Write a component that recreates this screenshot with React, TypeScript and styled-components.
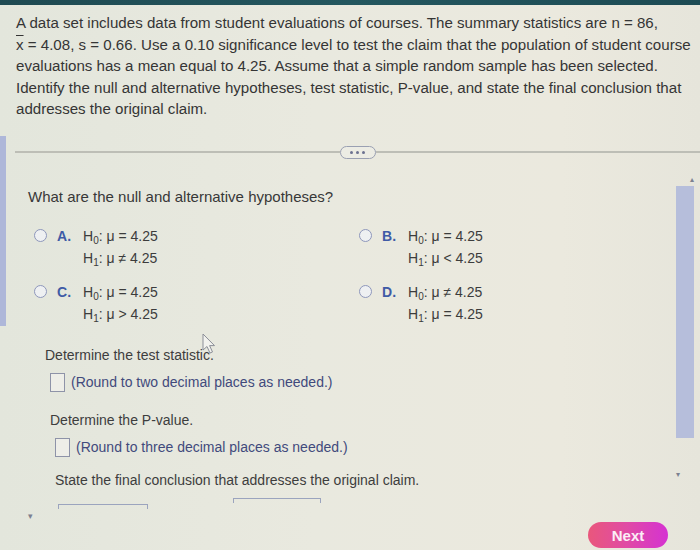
import React from 'react';
import styled, { createGlobalStyle } from 'styled-components';

const GlobalStyle = createGlobalStyle`
  html, body {
    margin: 0;
    padding: 0;
    background: #e7e7de;
  }
  * {
    box-sizing: border-box;
  }
`;

const options = [
  { letter: 'A', h0: '= 4.25', h1: '\u2260 4.25' },
  { letter: 'B', h0: '= 4.25', h1: '< 4.25' },
  { letter: 'C', h0: '= 4.25', h1: '> 4.25' },
  { letter: 'D', h0: '\u2260 4.25', h1: '= 4.25' },
];

const App = () => {
  return (
    <>
      <GlobalStyle />
      <Page>
        <TopBar />
        <Problem>
          <p>
            A data set includes data from student evaluations of courses. The summary statistics are n = 86,
          </p>
          <p>
            <XBar>x</XBar> = 4.08, s = 0.66. Use a 0.10 significance level to test the claim that the population of student course
          </p>
          <p>evaluations has a mean equal to 4.25. Assume that a simple random sample has been selected.</p>
          <p>Identify the null and alternative hypotheses, test statistic, P-value, and state the final conclusion that</p>
          <p>addresses the original claim.</p>
        </Problem>

        <Body>
          <LeftRail />
          <Column>
            <Divider>
              <DividerLine />
              <Pill>
                <Dot />
                <Dot />
                <Dot />
              </Pill>
              <DividerLine />
            </Divider>

            <Content>
              <Main>
                <Question>What are the null and alternative hypotheses?</Question>
                <OptionGrid>
                  {options.map((o) => (
                    <Option key={o.letter}>
                      <Radio />
                      <Letter>{o.letter}.</Letter>
                      <Hypotheses>
                        <span>
                          H<sub>0</sub>: {'\u03bc'} {o.h0}
                        </span>
                        <span>
                          H<sub>1</sub>: {'\u03bc'} {o.h1}
                        </span>
                      </Hypotheses>
                    </Option>
                  ))}
                </OptionGrid>

                <Prompt $indent={17} $top={20}>
                  Determine the test statistic.
                </Prompt>
                <AnswerRow $indent={22} $top={8}>
                  <AnswerBox />
                  <Hint>(Round to two decimal places as needed.)</Hint>
                </AnswerRow>

                <Prompt $indent={22} $top={18}>
                  Determine the P-value.
                </Prompt>
                <AnswerRow $indent={27} $top={8}>
                  <AnswerBox />
                  <Hint>(Round to three decimal places as needed.)</Hint>
                </AnswerRow>

                <Prompt $indent={27} $top={13}>
                  State the final conclusion that addresses the original claim.
                </Prompt>
                <DropRow>
                  <DropSlot $width={90} $lift={0} />
                  <DropSlot $width={88} $lift={6} />
                </DropRow>
                <SmallArrow>{'\u25be'}</SmallArrow>
              </Main>

              <ScrollColumn>
                <ScrollArrow $align="flex-end">{'\u25b4'}</ScrollArrow>
                <ScrollTrack />
                <ScrollArrow $align="flex-start" $top={33}>
                  {'\u25be'}
                </ScrollArrow>
              </ScrollColumn>
            </Content>
          </Column>
        </Body>

        <Footer>
          <NextButton type="button">Next</NextButton>
        </Footer>

        <Cursor viewBox="0 0 14 22" width="14" height="22">
          <path
            d="M1 1 L1 17 L5 13.5 L8 20 L10.5 19 L7.6 12.6 L12.5 12.6 Z"
            fill="#f2f2ee"
            stroke="#8c8f98"
            strokeWidth="1"
            strokeLinejoin="round"
          />
        </Cursor>
      </Page>
    </>
  );
};

export default App;

const Page = styled.div`
  position: relative;
  width: 700px;
  height: 550px;
  overflow: hidden;
  display: flex;
  flex-direction: column;
  font-family: 'Liberation Sans', Arial, sans-serif;
  color: #3a3a3a;
  background: linear-gradient(90deg, #e3e6dc 0%, #e9e9df 45%, #ebe9de 80%, #e6e5db 100%);
`;

const TopBar = styled.div`
  height: 5px;
  flex-shrink: 0;
  background: linear-gradient(90deg, #1f4a52, #24575f 50%, #1d4b54);
`;

const Problem = styled.div`
  padding: 7px 16px 0;
  font-size: 15.1px;
  line-height: 21.5px;
  color: #353535;

  p {
    margin: 0;
    white-space: nowrap;
  }
`;

const XBar = styled.span`
  text-decoration: overline;
`;

const Body = styled.div`
  flex: 1;
  min-height: 0;
  display: flex;
  margin-top: 16px;
  overflow: hidden;
`;

const LeftRail = styled.div`
  width: 6px;
  height: 190px;
  flex-shrink: 0;
  background: #aeb7d9;
`;

const Column = styled.div`
  flex: 1;
  display: flex;
  flex-direction: column;
  padding-top: 10px;
`;

const Divider = styled.div`
  display: flex;
  align-items: center;
  height: 13px;
  margin-left: 9px;
`;

const DividerLine = styled.div`
  flex: 1;
  height: 2px;
  background: #bdbeb6;
`;

const Pill = styled.div`
  width: 36px;
  height: 13px;
  border: 1.5px solid #9aa0b2;
  border-radius: 7px;
  background: #ecece4;
  display: flex;
  align-items: center;
  justify-content: center;
  gap: 3px;
`;

const Dot = styled.span`
  width: 3px;
  height: 3px;
  border-radius: 50%;
  background: #6c7290;
`;

const Content = styled.div`
  flex: 1;
  display: flex;
`;

const Main = styled.div`
  flex: 1;
  padding: 28px 0 0 22px;
`;

const Question = styled.div`
  font-size: 15px;
  line-height: 20px;
  color: #383838;
`;

const OptionGrid = styled.div`
  display: grid;
  grid-template-columns: 325px 1fr;
  row-gap: 12px;
  margin: 18px 0 0 6px;
`;

const Option = styled.div`
  display: flex;
  align-items: flex-start;
`;

const Radio = styled.span`
  width: 13px;
  height: 13px;
  margin-top: 4px;
  border-radius: 50%;
  border: 1.5px solid #8e97bb;
  background: #eef0f2;
  flex-shrink: 0;
`;

const Letter = styled.span`
  width: 36px;
  padding-left: 10px;
  font-size: 14px;
  line-height: 22px;
  font-weight: bold;
  color: #3f5ba6;
`;

const Hypotheses = styled.div`
  display: flex;
  flex-direction: column;
  font-size: 14px;
  line-height: 22px;
  color: #3c3c3c;

  sub {
    font-size: 10px;
    vertical-align: -3px;
    line-height: 0;
  }
`;

const Prompt = styled.div<{ $indent: number; $top: number }>`
  margin: ${(p) => p.$top}px 0 0 ${(p) => p.$indent}px;
  font-size: 14px;
  line-height: 20px;
  color: #3d3d3d;
`;

const AnswerRow = styled.div<{ $indent: number; $top: number }>`
  display: flex;
  align-items: center;
  gap: 6px;
  margin: ${(p) => p.$top}px 0 0 ${(p) => p.$indent}px;
`;

const AnswerBox = styled.span`
  width: 15px;
  height: 19px;
  border: 1px solid #8e93a8;
  background: #eeeee8;
`;

const Hint = styled.span`
  font-size: 14px;
  color: #414a7c;
`;

const DropRow = styled.div`
  display: flex;
  align-items: flex-start;
  gap: 85px;
  margin: 8px 0 0 30px;
`;

const DropSlot = styled.span<{ $width: number; $lift: number }>`
  width: ${(p) => p.$width}px;
  height: 5px;
  margin-top: ${(p) => 6 - p.$lift}px;
  border: 1.5px solid #9ba4be;
  border-bottom: none;
`;

const SmallArrow = styled.div`
  margin: 2px 0 0 0;
  font-size: 9px;
  line-height: 10px;
  color: #7c8090;
`;

const ScrollColumn = styled.div`
  width: 18px;
  margin: 17px 6px 0 0;
  display: flex;
  flex-direction: column;
`;

const ScrollArrow = styled.span<{ $align: string; $top?: number }>`
  align-self: ${(p) => p.$align};
  margin-top: ${(p) => p.$top ?? 0}px;
  font-size: 8px;
  line-height: 8px;
  color: #7d8190;
`;

const ScrollTrack = styled.div`
  height: 252px;
  margin-top: 2px;
  background: #b6bedb;
`;

const Footer = styled.div`
  display: flex;
  justify-content: flex-end;
  padding: 0 32px 2px 0;
  flex-shrink: 0;
`;

const NextButton = styled.button`
  width: 80px;
  height: 26px;
  border: none;
  border-radius: 13px;
  background: linear-gradient(90deg, #e9577c 0%, #e04aa6 50%, #d532d2 100%);
  color: #fbeef6;
  font-family: 'Liberation Sans', Arial, sans-serif;
  font-size: 15px;
  font-weight: bold;
  cursor: pointer;
`;

const Cursor = styled.svg`
  position: absolute;
  left: 202px;
  top: 333px;
  pointer-events: none;
`;
